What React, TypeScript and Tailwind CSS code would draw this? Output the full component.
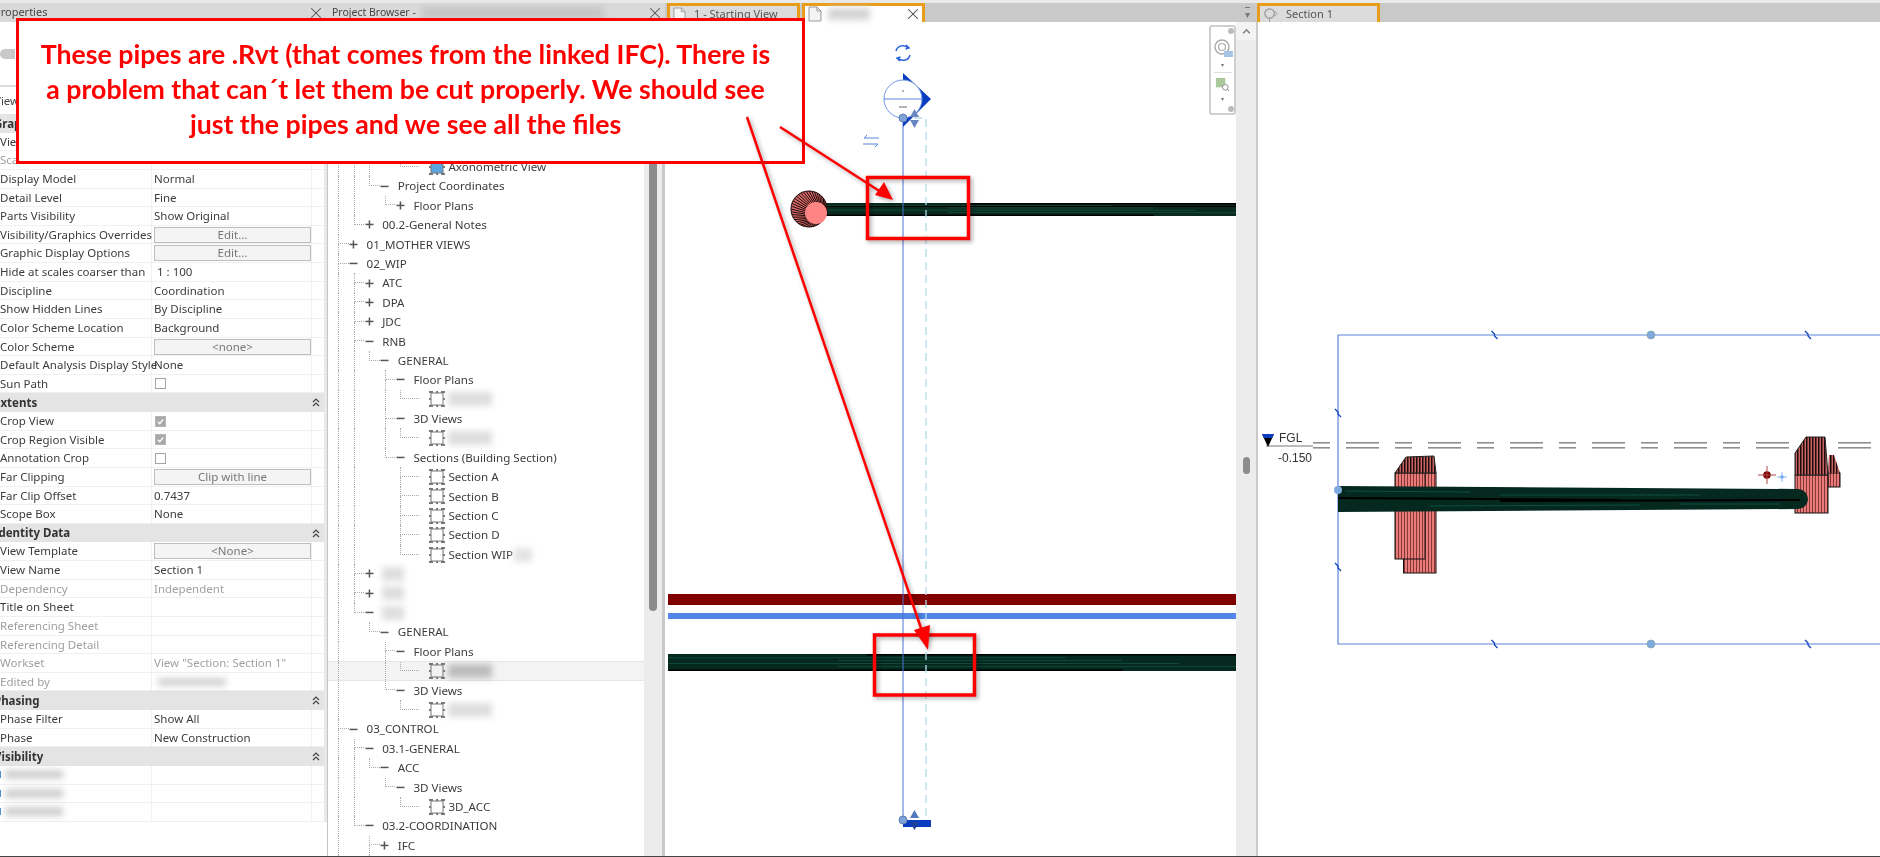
import { X } from 'lucide-react'

const uiFont = "font-['Noto_Sans',sans-serif]"

type PropRow = {
  label?: string
  value?: string
  button?: string
  check?: boolean
  header?: string
  muted?: boolean
  blurred?: boolean
}

const propRows: PropRow[] = [
  { header: 'Graphics' },
  { label: 'View Scale', value: '1 : 100' },
  { label: 'Scale Value 1:', value: '100', muted: true },
  { label: 'Display Model', value: 'Normal' },
  { label: 'Detail Level', value: 'Fine' },
  { label: 'Parts Visibility', value: 'Show Original' },
  { label: 'Visibility/Graphics Overrides', button: 'Edit...' },
  { label: 'Graphic Display Options', button: 'Edit...' },
  { label: 'Hide at scales coarser than', value: '\u00a01 : 100' },
  { label: 'Discipline', value: 'Coordination' },
  { label: 'Show Hidden Lines', value: 'By Discipline' },
  { label: 'Color Scheme Location', value: 'Background' },
  { label: 'Color Scheme', button: '<none>' },
  { label: 'Default Analysis Display Style', value: 'None' },
  { label: 'Sun Path', check: false },
  { header: 'Extents' },
  { label: 'Crop View', check: true },
  { label: 'Crop Region Visible', check: true },
  { label: 'Annotation Crop', check: false },
  { label: 'Far Clipping', button: 'Clip with line' },
  { label: 'Far Clip Offset', value: '0.7437' },
  { label: 'Scope Box', value: 'None' },
  { header: 'Identity Data' },
  { label: 'View Template', button: '<None>' },
  { label: 'View Name', value: 'Section 1' },
  { label: 'Dependency', value: 'Independent', muted: true },
  { label: 'Title on Sheet' },
  { label: 'Referencing Sheet', muted: true },
  { label: 'Referencing Detail', muted: true },
  { label: 'Workset', value: 'View "Section: Section 1"', muted: true },
  { label: 'Edited by', muted: true, blurred: true },
  { header: 'Phasing' },
  { label: 'Phase Filter', value: 'Show All' },
  { label: 'Phase', value: 'New Construction' },
  { header: 'Visibility' },
  { blurred: true },
  { blurred: true },
  { blurred: true },
]

type TreeItem = { d: number; t?: string; sign?: '+' | '-'; view?: boolean; blur?: boolean; sel?: boolean; axo?: boolean }

const treeItems: TreeItem[] = [
  { d: 4, t: 'Axonometric View', view: true, axo: true },
  { d: 2, t: 'Project Coordinates', sign: '-' },
  { d: 3, t: 'Floor Plans', sign: '+' },
  { d: 1, t: '00.2-General Notes', sign: '+' },
  { d: 0, t: '01_MOTHER VIEWS', sign: '+' },
  { d: 0, t: '02_WIP', sign: '-' },
  { d: 1, t: 'ATC', sign: '+' },
  { d: 1, t: 'DPA', sign: '+' },
  { d: 1, t: 'JDC', sign: '+' },
  { d: 1, t: 'RNB', sign: '-' },
  { d: 2, t: 'GENERAL', sign: '-' },
  { d: 3, t: 'Floor Plans', sign: '-' },
  { d: 4, view: true, blur: true },
  { d: 3, t: '3D Views', sign: '-' },
  { d: 4, view: true, blur: true },
  { d: 3, t: 'Sections (Building Section)', sign: '-' },
  { d: 4, t: 'Section A', view: true },
  { d: 4, t: 'Section B', view: true },
  { d: 4, t: 'Section C', view: true },
  { d: 4, t: 'Section D', view: true },
  { d: 4, t: 'Section WIP', view: true, blur: true },
  { d: 1, sign: '+', blur: true },
  { d: 1, sign: '+', blur: true },
  { d: 1, sign: '-', blur: true },
  { d: 2, t: 'GENERAL', sign: '-' },
  { d: 3, t: 'Floor Plans', sign: '-' },
  { d: 4, view: true, blur: true, sel: true },
  { d: 3, t: '3D Views', sign: '-' },
  { d: 4, view: true, blur: true },
  { d: 0, t: '03_CONTROL', sign: '-' },
  { d: 1, t: '03.1-GENERAL', sign: '-' },
  { d: 2, t: 'ACC', sign: '-' },
  { d: 3, t: '3D Views', sign: '-' },
  { d: 4, t: '3D_ACC', view: true },
  { d: 1, t: '03.2-COORDINATION', sign: '-' },
  { d: 2, t: 'IFC', sign: '+' },
  { d: 2 },
  { d: 0 },
]

// does a sibling at depth `d` still follow row `i`?
function continues(i: number, d: number) {
  for (let k = i + 1; k < treeItems.length; k++) {
    if (treeItems[k].d === d) return true
    if (treeItems[k].d < d) return false
  }
  return false
}

function Check({ on }: { on: boolean }) {
  return (
    <span className={`flex h-[11px] w-[11px] items-center justify-center border ${on ? 'border-[#b5b5b5] bg-[#a8a8a8]' : 'border-[#a5a5a5] bg-white'}`}>
      {on && (
        <svg viewBox="0 0 10 10" className="h-[9px] w-[9px]">
          <path d="M2 5.2 L4.2 7.4 L8 2.6" fill="none" stroke="white" strokeWidth="1.6" />
        </svg>
      )}
    </span>
  )
}

function Collapse() {
  return (
    <svg viewBox="0 0 8 9" className="h-[9px] w-[8px]">
      <path d="M1 4 L4 1 L7 4 M1 8 L4 5 L7 8" fill="none" stroke="#444" strokeWidth="1.2" />
    </svg>
  )
}

function Properties() {
  return (
    <div className="flex w-[327px] shrink-0 flex-col">
      <div className="mt-[3px] flex h-[19px] items-center justify-between bg-[#d9d9d9] pr-[2px]">
        <span className="-ml-[6px] text-[11px] text-[#444]">Properties</span>
        <X className="h-[18px] w-[18px] text-[#555]" strokeWidth={1.4} />
      </div>
      <div className="flex h-[63px] items-center bg-white">
        <span className="h-[10px] w-[15px] rounded-l-full bg-[#c9c9c9]" />
      </div>
      <div className="flex h-[29px] items-center border-t-2 border-[#dcdcdc] bg-white">
        <span className="-ml-[6px] text-[11.5px] text-[#444]">Views</span>
      </div>
      <div className="w-[324px] bg-white">
        {propRows.map((r, i) =>
          r.header ? (
            <div key={i} className="flex h-[18.63px] items-center justify-between bg-[#e4e4e4] pr-[4px]">
              <span className="-ml-[6px] text-[11.5px] font-bold text-[#333]">{r.header}</span>
              <Collapse />
            </div>
          ) : (
            <div key={i} className="grid h-[18.63px] grid-cols-[152px_160px_12px] border-b border-[#f0f0f0] text-[11.5px] leading-[18px]">
              <div className={`whitespace-nowrap border-r border-[#f0f0f0] ${r.muted ? 'text-[#a0a0a0]' : 'text-[#3c3c3c]'}`}>
                {r.label ?? (
                  <span className="flex h-full items-center gap-[4px]">
                    <span className="h-[7px] w-[1px] bg-[#4a90d0]" />
                    <span className="h-[9px] w-[58px] bg-[#cfcfcf] blur-[3px]" />
                  </span>
                )}
              </div>
              <div className={`flex items-center border-r border-[#f0f0f0] pl-[2px] whitespace-nowrap ${r.muted ? 'text-[#a0a0a0]' : 'text-[#3c3c3c]'}`}>
                {r.button && (
                  <button className="flex h-[16px] w-[157px] items-center justify-center border border-[#bdbdbd] bg-[#f4f4f4] text-[#777]">
                    {r.button}
                  </button>
                )}
                {r.value}
                {r.check !== undefined && (
                  <span className="pl-[1px]">
                    <Check on={r.check} />
                  </span>
                )}
                {r.blurred && r.label && <span className="ml-[4px] h-[8px] w-[68px] bg-[#d2d2d2] blur-[3px]" />}
              </div>
              <div />
            </div>
          ),
        )}
      </div>
      <div className="flex-1 bg-white" />
    </div>
  )
}

function ViewIcon({ axo }: { axo?: boolean }) {
  return (
    <svg viewBox="0 0 16 16" className="h-[16px] w-[16px] shrink-0">
      {axo && <rect x="2" y="2" width="12" height="12" fill="#5aa5e0" />}
      <rect x="2" y="2" width="12" height="12" fill="none" stroke="#777" strokeWidth="1" />
      <g fill="#777">
        <rect x="0" y="0" width="4" height="2" />
        <rect x="12" y="0" width="4" height="2" />
        <rect x="0" y="14" width="4" height="2" />
        <rect x="12" y="14" width="4" height="2" />
        <rect x="0" y="7" width="2" height="2" />
        <rect x="14" y="7" width="2" height="2" />
        <rect x="7" y="0" width="2" height="2" />
        <rect x="7" y="14" width="2" height="2" />
      </g>
    </svg>
  )
}

function Sign({ s }: { s: '+' | '-' }) {
  return (
    <svg viewBox="0 0 9 9" className="-ml-[4.5px] h-[9px] w-[9px] shrink-0">
      <rect x="0.5" y="3.7" width="8" height="1.5" fill="#555" />
      {s === '+' && <rect x="3.7" y="0.5" width="1.5" height="8" fill="#555" />}
    </svg>
  )
}

function TreeRow({ item, index }: { item: TreeItem; index: number }) {
  const guides = Array.from({ length: item.d }, (_, j) => continues(index, j))
  const more = continues(index, item.d)
  return (
    <div className={`flex h-[19.4px] items-stretch pl-[10px] text-[11.6px] text-[#3c3c3c] ${item.sel ? 'border-y border-[#e6e6e6] bg-[#f3f3f3]' : ''}`}>
      {guides.map((on, j) => (
        <div key={j} className={`w-[15.6px] shrink-0 ${on ? 'border-l border-dotted border-[#aaa]' : ''}`} />
      ))}
      <div className={`flex shrink-0 flex-col ${item.view ? 'w-[24px]' : 'w-[15.6px]'}`}>
        <div className="mr-[5px] h-1/2 border-b border-l border-dotted border-[#aaa]" />
        {more && <div className="h-1/2 border-l border-dotted border-[#aaa]" />}
      </div>
      {item.sign && (
        <div className="flex items-center">
          <Sign s={item.sign} />
        </div>
      )}
      <div className={`flex items-center ${item.view ? 'ml-[5px] gap-[3px]' : 'ml-[8.5px]'}`}>
        {item.view && <ViewIcon axo={item.axo} />}
        {item.t && <span className="whitespace-nowrap">{item.t}</span>}
        {item.blur && !item.t && (
          <span className={`h-[14px] blur-[3px] ${item.view ? 'w-[44px]' : 'w-[22px]'} ${item.sel ? 'bg-[#bdbdbd]' : 'bg-[#dedede]'}`} />
        )}
        {item.blur && item.t && <span className="-ml-[2px] h-[14px] w-[18px] bg-[#e4e4e4] blur-[3px]" />}
      </div>
    </div>
  )
}

function ProjectBrowser() {
  return (
    <div className="flex w-[338px] shrink-0 flex-col">
      <div className="mt-[3px] flex h-[19px] items-center bg-[#d9d9d9] pl-[5px] pr-[1px]">
        <span className="text-[10.5px] text-[#444]">Project Browser -</span>
        <span className="ml-[6px] h-[12px] w-[182px] bg-[#c6c6c6] blur-[3px]" />
        <X className="ml-auto h-[18px] w-[18px] text-[#555]" strokeWidth={1.4} />
      </div>
      <div className="flex flex-1 overflow-hidden">
        <div className="w-[1px] shrink-0 bg-[#c4c4c4]" />
        <div className="w-[316px] shrink-0 overflow-hidden bg-white pt-[135px]">
          {treeItems.map((item, i) => (
            <TreeRow key={i} item={item} index={i} />
          ))}
        </div>
        <div className="flex-1 bg-[#ececec] pl-[5px] pt-[70px]">
          <div className="h-[519px] w-[8px] rounded-b-[4px] bg-[#8c8c8c]" />
        </div>
        <div className="w-[3px] shrink-0 bg-[#c9c9c9]" />
      </div>
    </div>
  )
}

function DocIcon({ className }: { className: string }) {
  return (
    <svg viewBox="0 0 14 16" className={className}>
      <path d="M1 1 H9 L13 5 V15 H1 Z" fill="#f4f4f4" stroke="#999" />
      <path d="M9 1 V5 H13" fill="none" stroke="#999" />
    </svg>
  )
}

function NavWidget() {
  return (
    <div className="flex h-[90px] w-[27px] flex-col items-center justify-between rounded-[3px] border-2 border-[#cfcfcf] bg-white py-[1px]">
      <span className="h-[6px] w-[6px] self-end rounded-full bg-[#bbb]" />
      <svg viewBox="0 0 20 20" className="h-[20px] w-[20px]">
        <circle cx="9" cy="9" r="7" fill="none" stroke="#aaa" strokeWidth="1.4" />
        <circle cx="9" cy="9" r="3.5" fill="none" stroke="#aaa" strokeWidth="1.2" />
        <rect x="11" y="13" width="9" height="6" fill="#a5c4e6" />
      </svg>
      <span className="text-[6px] leading-[6px] text-[#777]">▾</span>
      <span className="h-[1px] w-[18px] bg-[#ddd]" />
      <svg viewBox="0 0 16 16" className="h-[15px] w-[15px]">
        <rect x="1" y="1" width="10" height="10" fill="#a9c99a" />
        <circle cx="11" cy="11" r="3" fill="white" stroke="#888" />
        <path d="M13 13 L15 15" stroke="#888" />
      </svg>
      <span className="text-[6px] leading-[6px] text-[#777]">▾</span>
      <span className="h-[6px] w-[6px] self-end rounded-full bg-[#bbb]" />
    </div>
  )
}

// streaky dark pipe seen from the side
function Pipe({ x, y, w, h, base }: { x: number; y: number; w: number; h: number; base: string }) {
  const streaks = [0.22, 0.38, 0.56, 0.74]
  return (
    <g>
      <rect x={x} y={y} width={w} height={h} fill={base} />
      {streaks.map((s, i) => (
        <line key={i} x1={x + (i % 2) * w * 0.3} x2={x + w * (0.7 + i * 0.1)} y1={y + h * s} y2={y + h * s} stroke="#12503f" strokeWidth="0.8" />
      ))}
      <rect x={x + w * 0.35} y={y} width={w * 0.65} height="1.5" fill="#000" />
      <rect x={x} y={y + h - 1.5} width={w * 0.8} height="1.5" fill="#000" />
    </g>
  )
}

function PlanCanvas() {
  const spokes = Array.from({ length: 40 }, (_, i) => (i * Math.PI) / 20)
  return (
    <svg className="h-[835px] w-[571px]" viewBox="665 22 571 835">
      <Pipe x={825} y={203} w={411} h={13} base="#0a2a1e" />
      <rect x="825" y="206" width="411" height="1" fill="#000" />
      <circle cx="809" cy="209" r="18" fill="#d96a6a" stroke="#1a0808" />
      {spokes.map((a, i) => (
        <line
          key={i}
          x1={816 + 9 * Math.cos(a)}
          y1={213 + 9 * Math.sin(a)}
          x2={809 + 18 * Math.cos(a)}
          y2={209 + 18 * Math.sin(a)}
          stroke="#1a0808"
          strokeWidth="1"
        />
      ))}
      <circle cx="816" cy="213" r="11" fill="#ff8585" />
      <rect x="668" y="594" width="568" height="11" fill="#800000" />
      <rect x="668" y="613" width="568" height="6" fill="#4f86e8" />
      <Pipe x={668} y={654} w={568} h={17} base="#06291f" />

      <line x1="903" y1="118" x2="903" y2="820" stroke="#4a72d4" strokeWidth="1" />
      <path d="M914 118 H926 V820" fill="none" stroke="#b5dcec" strokeWidth="1.3" strokeDasharray="8 5" />
      <polygon points="903,73 931,99 903,127" fill="#0a3cc0" />
      <circle cx="903" cy="99" r="19" fill="white" stroke="#6f96e6" strokeWidth="1" />
      <line x1="884" y1="99" x2="922" y2="99" stroke="#5d86e0" strokeWidth="1.2" />
      <line x1="902" y1="91" x2="904" y2="91" stroke="#666" />
      <line x1="899" y1="107" x2="907" y2="107" stroke="#666" />
      <circle cx="903" cy="118" r="4" fill="#7fa5d8" stroke="#5e7fb5" />
      <polygon points="914.5,109 919,117 910,117" fill="#6a86c0" />
      <polygon points="910,120 919,120 914.5,128" fill="#6a86c0" />
      <g fill="none" stroke="#2a62d8" strokeWidth="1.5">
        <path d="M896 51 a7 7 0 0 1 12 -3 M910 55 a7 7 0 0 1 -12 3" />
        <path d="M906 45 l3 3 l-3.5 1 M900 61 l-3 -3 l3.5 -1" />
      </g>
      <g fill="none" stroke="#5a86dc" strokeWidth="1">
        <path d="M879 138 H864 l3 -3 M863 144 H878 l-3 3" />
      </g>
      <rect x="903" y="820" width="28" height="7" fill="#0a3cc0" />
      <circle cx="903" cy="820" r="4" fill="#7fa5d8" stroke="#5e7fb5" />
      <polygon points="914.5,810 919,818 910,818" fill="#5478c0" />
      <polygon points="910,822 919,822 914.5,830" fill="#1c3f9c" />
    </svg>
  )
}

function SectionCanvas() {
  const dashes = Array.from({ length: 8 }, (_, i) => 1313 + i * 82)
  return (
    <svg className="h-[835px] w-[622px]" viewBox="1258 22 622 835">
      <defs>
        <pattern id="ribs" width="3" height="3" patternUnits="userSpaceOnUse">
          <rect width="3" height="3" fill="#e97b78" />
          <rect width="0.9" height="3" fill="#7a2f2f" />
        </pattern>
        <pattern id="cap" width="3" height="3" patternUnits="userSpaceOnUse">
          <rect width="3" height="3" fill="#c86563" />
          <rect width="1.5" height="3" fill="#1c0a0a" />
        </pattern>
      </defs>
      <path d="M1880 335 H1338 V644 H1880" fill="none" stroke="#5a86dc" strokeWidth="1.2" />
      {[[1494.5, 335], [1808, 335], [1494.5, 644], [1808, 644], [1338, 413], [1338, 567]].map(([x, y], i) => (
        <path key={i} d={`M${x - 3} ${y - 4} l3 3 l0 2 l3 3`} fill="none" stroke="#0a3cc0" strokeWidth="1.2" />
      ))}
      {[[1651, 335], [1651, 644]].map(([x, y], i) => (
        <circle key={i} cx={x} cy={y} r="4" fill="#7fa8de" stroke="#8aa" strokeWidth="0.8" />
      ))}

      {dashes.map((x) => (
        <g key={x} fill="#8f8f8f">
          <rect x={x} y="442" width="17" height="1.6" />
          <rect x={x} y="447" width="17" height="1.6" />
          <rect x={x + 33} y="442" width="33" height="1.6" />
          <rect x={x + 33} y="447" width="33" height="1.6" />
        </g>
      ))}
      <line x1="1266" y1="446" x2="1313" y2="446" stroke="#777" />
      <polygon points="1262,434 1274,434 1268,447" fill="#000" />
      <polygon points="1262,434 1274,434 1272,438 1264,438" fill="#0a3cc0" />
      <text x="1279" y="442" fontFamily="Liberation Sans" fontSize="12" fill="#333">FGL</text>
      <text x="1278" y="462" fontFamily="Liberation Sans" fontSize="12" fill="#333">-0.150</text>

      <rect x="1403.5" y="473" width="32.5" height="100" fill="url(#ribs)" stroke="#111" />
      <rect x="1395" y="473" width="30" height="86" fill="url(#ribs)" stroke="#111" />
      <polygon points="1395,473 1406,457 1434,456 1436,473" fill="url(#cap)" stroke="#222" />

      <rect x="1828" y="473" width="12" height="14" fill="url(#ribs)" stroke="#111" />
      <polygon points="1828,473 1829,455 1834,455 1840,473" fill="url(#cap)" />
      <rect x="1795" y="475" width="33" height="38" fill="url(#ribs)" stroke="#111" />
      <polygon points="1795,475 1795,453 1806,437 1825,437 1828,475" fill="url(#cap)" stroke="#222" />

      <path d="M1338 486 L1798 489 a10 10 0 0 1 0 20 L1338 512 Z" fill="#06291f" />
      <g stroke="#000" strokeWidth="2">
        <line x1="1338" y1="498" x2="1620" y2="500" />
        <line x1="1500" y1="501" x2="1800" y2="500" />
      </g>
      <g stroke="#0f5a48" strokeWidth="0.8">
        <line x1="1345" y1="491" x2="1470" y2="492" />
        <line x1="1500" y1="495" x2="1700" y2="495" />
        <line x1="1430" y1="506" x2="1640" y2="505" />
        <line x1="1680" y1="504" x2="1780" y2="504" />
      </g>
      <circle cx="1338" cy="490" r="4" fill="#7fa8de" />

      <circle cx="1767" cy="475" r="3.8" fill="#800000" />
      <path d="M1758 475 H1776 M1767 466 V484" stroke="#a84848" strokeWidth="1" />
      <circle cx="1782" cy="477" r="1.8" fill="#4a8ff0" />
      <path d="M1777 477 H1787 M1782 472 V482" stroke="#8ab8f5" strokeWidth="1" />
    </svg>
  )
}

function Views() {
  return (
    <div className="flex min-w-0 flex-1 flex-col">
      <div className="mt-[3px] flex h-[19px] bg-[#c9c9c9]">
        <div className="ml-[2px] flex w-[133px] items-center gap-[8px] border-x-[3px] border-t-[3px] border-[#e89c1a] bg-[#dcdcdc] pl-[3px] text-[11px] text-[#555]">
          <DocIcon className="h-[15px] w-[13px]" />
          1 - Starting View
        </div>
        <div className="ml-[2px] flex w-[123px] items-center border-x-[3px] border-t-[3px] border-[#e89c1a] bg-white pl-[3px]">
          <DocIcon className="h-[16px] w-[14px]" />
          <span className="ml-[6px] h-[12px] w-[42px] bg-[#d4d4d4] blur-[3px]" />
          <X className="ml-auto h-[18px] w-[18px] text-[#444]" strokeWidth={1.4} />
        </div>
        <div className="flex flex-1 items-center justify-end pr-[5px] text-[10px] leading-[10px] text-[#777]">
          <span className="border-t border-[#777] pt-[1px]">▾</span>
        </div>
        <div className="ml-[2px] flex w-[123px] items-center gap-[8px] border-x-[3px] border-t-[3px] border-[#e89c1a] bg-[#dcdcdc] pl-[3px] text-[11px] text-[#555]">
          <svg viewBox="0 0 16 16" className="h-[15px] w-[15px]">
            <circle cx="7" cy="7" r="5" fill="none" stroke="#999" strokeWidth="1.4" />
            <path d="M7 12 V16 M12 4 L15 7 L12 10" fill="none" stroke="#999" />
          </svg>
          Section 1
        </div>
        <div className="w-[500px] shrink-0 bg-[#c9c9c9]" />
      </div>
      <div className="flex flex-1 overflow-hidden">
        <div className="w-[571px] shrink-0 bg-white">
          <PlanCanvas />
        </div>
        <div className="flex w-[20px] shrink-0 flex-col items-center bg-[#ececec]">
          <div className="flex h-[18px] w-full items-center justify-center bg-[#f3f3f3] text-[#777]">
            <svg viewBox="0 0 10 6" className="h-[5px] w-[9px]">
              <path d="M1 5 L5 1 L9 5" fill="none" stroke="#777" strokeWidth="1.6" />
            </svg>
          </div>
          <div className="mt-[417px] h-[17px] w-[7px] rounded-full bg-[#8c8c8c]" />
        </div>
        <div className="w-[2px] shrink-0 bg-[#c9c9c9]" />
        <div className="w-[622px] shrink-0 bg-white">
          <SectionCanvas />
        </div>
      </div>
    </div>
  )
}

export default function App() {
  return (
    <div className={`relative flex h-[857px] w-[1880px] overflow-hidden border-b border-[#444] bg-[#e9e9e9] blur-[0.35px] ${uiFont}`}>
      <Properties />
      <ProjectBrowser />
      <Views />

      {/* annotations pasted over the screenshot */}
      <div className="absolute top-[25px] left-[1209px]">
        <NavWidget />
      </div>
      <div className="absolute top-[18px] left-[16px] flex h-[146px] w-[789px] items-center justify-center border-[3px] border-[#ff0000] bg-white pr-[10px] pb-[4px] text-center font-['Lato',sans-serif] text-[26.7px] leading-[35px] font-bold whitespace-nowrap text-[#ff0000]">
        <p>
          These pipes are .Rvt (that comes from the linked IFC). There is
          <br />a problem that can´t let them be cut properly. We should see
          <br />
          just the pipes and we see all the files
        </p>
      </div>
      <svg className="pointer-events-none absolute top-0 left-0 h-[857px] w-[1880px]" viewBox="0 0 1880 857">
        <g className="drop-shadow-[2px_2px_2px_rgba(0,0,0,0.35)]" fill="none" stroke="#ff0000">
          <rect x="867.5" y="177.5" width="101" height="61" strokeWidth="3.5" />
          <rect x="874.5" y="635" width="100" height="60" strokeWidth="3.5" />
          <line x1="780" y1="127" x2="884" y2="194" strokeWidth="2.5" />
          <line x1="747" y1="117" x2="923" y2="634" strokeWidth="2.5" />
        </g>
        <g fill="#ff0000" className="drop-shadow-[2px_2px_2px_rgba(0,0,0,0.3)]">
          <polygon points="893,200 875,195 884,182" />
          <polygon points="928,650 914,630 930,625" />
        </g>
      </svg>
    </div>
  )
}
